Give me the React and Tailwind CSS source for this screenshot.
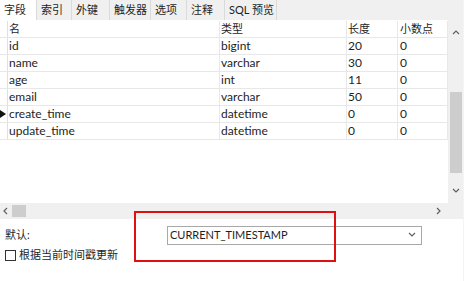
import React from "react";

const FONT = { fontFamily: 'Lato, "Noto Sans CJK SC", sans-serif' };

const tabs = [
  ["字段", "w-[37px]"],
  ["索引", "w-[35px]"],
  ["外键", "w-[38px]"],
  ["触发器", "w-[41px]"],
  ["选项", "w-[36px]"],
  ["注释", "w-[38px]"],
  ["SQL 预览", "w-[52px]"],
];

const rows = [
  ["id", "bigint", "20", "0"],
  ["name", "varchar", "30", "0"],
  ["age", "int", "11", "0"],
  ["email", "varchar", "50", "0"],
  ["create_time", "datetime", "0", "0"],
  ["update_time", "datetime", "0", "0"],
];

function Chevron({ dir, className }) {
  const d = {
    up: "M1 5 L4 2 L7 5",
    down: "M1 2 L4 5 L7 2",
    left: "M5 1 L2 4 L5 7",
    right: "M2 1 L5 4 L2 7",
  }[dir];
  return (
    <svg width="8" height="8" viewBox="0 0 8 8" className={className}>
      <path d={d} fill="none" stroke="#606060" strokeWidth="1.2" />
    </svg>
  );
}

function Row({ cells, header, marker }) {
  const h = header ? "h-[18px] text-[11px] pt-[1px]" : "h-[17px] text-[12px]";
  return (
    <div className={`flex ${h} border-b border-[#e8e8e8] leading-[16px] text-[#1e1e1e]`}>
      <div className="w-[8px] border-r border-[#e0e0e0] flex items-center">
        {marker && (
          <svg width="6" height="8" viewBox="0 0 6 8">
            <path d="M0 0 L6 4 L0 8 Z" fill="#111" />
          </svg>
        )}
      </div>
      <div className="w-[212px] border-r border-[#e8e8e8] pl-[1px] flex items-center">{cells[0]}</div>
      <div className="w-[127px] border-r border-[#e8e8e8] pl-[1px] flex items-center">{cells[1]}</div>
      <div className="w-[51px] border-r border-[#e8e8e8] pl-[1px] flex items-center">{cells[2]}</div>
      <div className="w-[50px] border-r border-[#e8e8e8] pl-[2px] flex items-center">{cells[3]}</div>
    </div>
  );
}

export default function App() {
  return (
    <div className="w-[474px] h-[281px] bg-white flex overflow-hidden" style={FONT}>
      <div className="w-[463px] flex flex-col">
        {/* tab bar */}
        <div className="h-[20px] bg-[#f0f0f0] flex items-end">
          {tabs.map(([t, w], i) => (
            <div
              key={t}
              className={`${w} shrink-0 whitespace-nowrap h-[20px] flex items-center pl-[4px] text-[11px] text-[#1e1e1e] border-r border-[#dadada] ${
                i === 0 ? "bg-white pl-[3px]" : "bg-[#f0f0f0]"
              }`}
            >
              {t}
            </div>
          ))}
        </div>

        {/* grid + vertical scrollbar */}
        <div className="h-[183px] flex">
          <div className="w-[448px] bg-white flex flex-col">
            <Row header cells={["名", "类型", "长度", "小数点"]} />
            {rows.map((r, i) => (
              <Row key={r[0]} cells={r} marker={i === 4} />
            ))}
          </div>
          <div className="w-[15px] bg-[#f0f0f0] flex flex-col items-center">
            <div className="h-[18px] flex items-center justify-center mt-[4px]">
              <Chevron dir="up" />
            </div>
            <div className="h-[50px]" />
            <div className="w-[12px] h-[81px] bg-[#cdcdcd]" />
            <div className="flex-1" />
            <div className="h-[16px] flex items-center justify-center mb-[4px]">
              <Chevron dir="down" />
            </div>
          </div>
        </div>

        {/* horizontal scrollbar */}
        <div className="h-[16px] flex">
          <div className="w-[448px] bg-[#f0f0f0] flex items-center">
            <div className="w-[11px] flex items-center justify-center">
              <Chevron dir="left" />
            </div>
            <div className="w-[14px] h-[12px] bg-[#cdcdcd] ml-[1px]" />
            <div className="flex-1" />
            <div className="w-[12px] flex items-center justify-center mr-[3px]">
              <Chevron dir="right" />
            </div>
          </div>
          <div className="w-[15px] bg-[#f0f0f0]" />
        </div>

        {/* bottom form */}
        <div className="relative flex-1 bg-white text-[11px] text-[#1e1e1e]">
          <div className="flex items-center mt-[7px] h-[18px]">
            <span className="w-[167px] pl-[5px]">默认:</span>
            <div className="w-[255px] h-[19px] border border-[#a8a8a8] bg-white flex items-center pl-[2px]">
              <span className="flex-1 whitespace-nowrap text-[11px]">CURRENT_TIMESTAMP</span>
              <Chevron dir="down" className="mr-[5px]" />
            </div>
          </div>
          <div className="flex items-center mt-[4px] h-[14px] pl-[5px]">
            <div className="w-[11px] h-[11px] border border-[#333] bg-white" />
            <span className="ml-[3px]">根据当前时间戳更新</span>
          </div>
          <div className="absolute left-[134px] top-[-8px] w-[202px] h-[51px] border-2 border-[#e01010]" />
        </div>
      </div>
      <div className="flex-1 bg-white border-l border-[#f4f4f4]" />
    </div>
  );
}
